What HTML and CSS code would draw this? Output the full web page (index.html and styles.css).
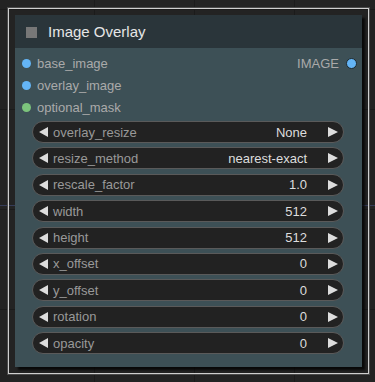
FILE: index.html
```html
<!DOCTYPE html>
<html>
<head lang="en">
    <meta charset="UTF-8">
    <title>Image Overlay</title>
    <link rel="stylesheet" href="styles.css">
</head>
<body>
    <div id="canvas">
        <div class="link"></div>
        <div class="selection">
            <div class="node">
                <div class="title">
                    <span class="box"></span>
                    <span class="title-text">Image Overlay</span>
                </div>
                <div class="body">
                    <div class="slot">
                        <span class="dot blue"></span>
                        <span class="slot-name">base_image</span>
                        <span class="output">IMAGE<span class="dot out"></span></span>
                    </div>
                    <div class="slot">
                        <span class="dot blue"></span>
                        <span class="slot-name">overlay_image</span>
                    </div>
                    <div class="slot">
                        <span class="dot green"></span>
                        <span class="slot-name">optional_mask</span>
                    </div>

                    <ul class="widgets">
                        <li><span class="arrow left"></span><span class="label">overlay_resize</span><span class="value">None</span><span class="arrow right"></span></li>
                        <li><span class="arrow left"></span><span class="label">resize_method</span><span class="value">nearest-exact</span><span class="arrow right"></span></li>
                        <li><span class="arrow left"></span><span class="label">rescale_factor</span><span class="value">1.0</span><span class="arrow right"></span></li>
                        <li><span class="arrow left"></span><span class="label">width</span><span class="value">512</span><span class="arrow right"></span></li>
                        <li><span class="arrow left"></span><span class="label">height</span><span class="value">512</span><span class="arrow right"></span></li>
                        <li><span class="arrow left"></span><span class="label">x_offset</span><span class="value">0</span><span class="arrow right"></span></li>
                        <li><span class="arrow left"></span><span class="label">y_offset</span><span class="value">0</span><span class="arrow right"></span></li>
                        <li><span class="arrow left"></span><span class="label">rotation</span><span class="value">0</span><span class="arrow right"></span></li>
                        <li><span class="arrow left"></span><span class="label">opacity</span><span class="value">0</span><span class="arrow right"></span></li>
                    </ul>
                </div>
            </div>
        </div>
    </div>
</body>
</html>
```
FILE: styles.css
```css
*{
    margin:0;
    padding:0;
    box-sizing:border-box;
}
ul{
    list-style:none;
}
body{
    background:#222;
    font-family:"Liberation Sans", Arial, sans-serif;
}
#canvas{
    width:375px;
    height:382px;
    padding:8px;
    position:relative;
    background-color:#232323;
    background-image:
        linear-gradient(#1b1b1b 1px, transparent 1px),
        linear-gradient(90deg, #1b1b1b 1px, transparent 1px);
    background-size:100px 100px;
    background-position:-6px 9px;
}
/* link wire passing behind the node */
.link{
    position:absolute;
    left:0;
    right:0;
    top:205px;
    height:1px;
    background:rgba(90,110,190,0.35);
}
.selection{
    position:relative;
    width:361px;
    height:366px;
    border:1px solid #cfcfcf;
    outline:1px solid #4a4a4a;
    padding:6px;
}
.node{
    width:347px;
    height:352px;
    background:#3d5056;
    box-shadow:3px 3px 2px rgba(0,0,0,0.75);
}
.title{
    height:33px;
    background:#2a353a;
    display:flex;
    align-items:center;
    padding-left:11px;
}
.box{
    width:11px;
    height:11px;
    background:#777;
    margin-right:11px;
    margin-top:1px;
}
.title-text{
    color:#e6e6e6;
    font-size:15px;
    margin-top:-1px;
}
.body{
    padding:4px 0 0 0;
}
.slot{
    height:22px;
    display:flex;
    align-items:center;
    padding-left:7px;
    font-size:13px;
    color:#aaa;
}
.dot{
    width:9px;
    height:9px;
    border-radius:50%;
    margin-right:6px;
}
.blue{
    background:#64b5f6;
}
.green{
    background:#7cc47c;
}
.slot-name{
    flex:1;
}
.output{
    display:flex;
    align-items:center;
    padding-right:5px;
}
.dot.out{
    width:11px;
    height:11px;
    background:#64b5f6;
    border:1.5px solid #1e2a30;
    margin:0 0 0 7px;
}
.widgets{
    margin:3px 18px 0 17px;
}
.widgets li{
    height:22px;
    margin-bottom:4.4px;
    background:#222;
    border:1px solid #5a5a5a;
    border-radius:11px;
    display:flex;
    align-items:center;
    font-size:13px;
    padding:0 5px 0 6px;
}
.arrow{
    width:0;
    height:0;
    border-top:5px solid transparent;
    border-bottom:5px solid transparent;
}
.arrow.left{
    border-right:9px solid #ddd;
    margin-right:5px;
}
.arrow.right{
    border-left:10px solid #ddd;
    margin-left:21px;
}
.label{
    flex:1;
    color:#999;
}
.value{
    color:#ddd;
}
```
